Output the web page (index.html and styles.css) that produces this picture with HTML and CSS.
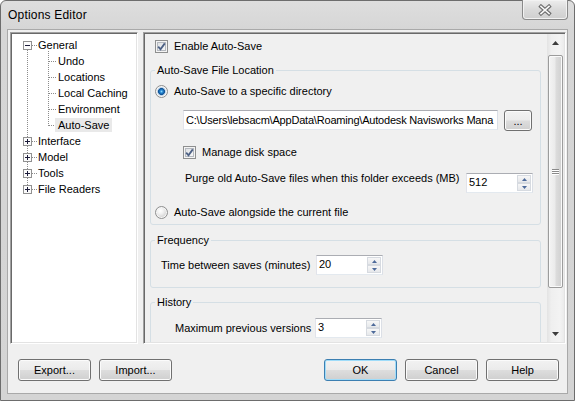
FILE: index.html
```html
<!DOCTYPE html>
<html>
<head>
<meta charset="utf-8">
<title>Options Editor</title>
<link rel="stylesheet" href="styles.css">
</head>
<body>
<div class="window">
  <div class="titlebar">
    <span class="title">Options Editor</span>
    <div class="close-btn">
      <svg width="14" height="12" viewBox="0 0 14 12"><path d="M3 2.5 L11 9.5 M11 2.5 L3 9.5" stroke="#6e6e6e" stroke-width="3.8" stroke-linecap="square" fill="none"/><path d="M3 2.5 L11 9.5 M11 2.5 L3 9.5" stroke="#fbfbfb" stroke-width="1.6" stroke-linecap="square" fill="none"/></svg>
    </div>
  </div>
  <div class="client">
    <div class="panes">
      <div class="tree sunken">
        <svg class="tree-lines" width="124" height="307" viewBox="0 0 124 307">
          <g stroke="#8c8c8c" stroke-width="1" stroke-dasharray="1 1" shape-rendering="crispEdges" fill="none">
            <line x1="15.5" y1="16" x2="15.5" y2="156"/>
            <line x1="20" y1="11.5" x2="25" y2="11.5"/>
            <line x1="20" y1="107.5" x2="25" y2="107.5"/>
            <line x1="20" y1="123.5" x2="25" y2="123.5"/>
            <line x1="20" y1="139.5" x2="25" y2="139.5"/>
            <line x1="20" y1="155.5" x2="25" y2="155.5"/>
            <line x1="36.5" y1="17" x2="36.5" y2="92"/>
            <line x1="37" y1="27.5" x2="45" y2="27.5"/>
            <line x1="37" y1="43.5" x2="45" y2="43.5"/>
            <line x1="37" y1="59.5" x2="45" y2="59.5"/>
            <line x1="37" y1="75.5" x2="45" y2="75.5"/>
            <line x1="37" y1="91.5" x2="45" y2="91.5"/>
          </g>
        </svg>
        <ul class="tree-list">
          <li class="node root"><svg class="exp" width="9" height="9" viewBox="0 0 9 9"><rect x="0.5" y="0.5" width="8" height="8" fill="#fbfbfb" stroke="#919191"/><path d="M2 4.5 H7" stroke="#1b1b3a" stroke-width="1"/></svg><span class="tl">General</span></li>
          <li class="node child"><span class="tl">Undo</span></li>
          <li class="node child"><span class="tl">Locations</span></li>
          <li class="node child"><span class="tl">Local Caching</span></li>
          <li class="node child"><span class="tl">Environment</span></li>
          <li class="node child"><span class="tl sel">Auto-Save</span></li>
          <li class="node root"><svg class="exp" width="9" height="9" viewBox="0 0 9 9"><rect x="0.5" y="0.5" width="8" height="8" fill="#fbfbfb" stroke="#919191"/><path d="M2 4.5 H7 M4.5 2 V7" stroke="#1b1b3a" stroke-width="1"/></svg><span class="tl">Interface</span></li>
          <li class="node root"><svg class="exp" width="9" height="9" viewBox="0 0 9 9"><rect x="0.5" y="0.5" width="8" height="8" fill="#fbfbfb" stroke="#919191"/><path d="M2 4.5 H7 M4.5 2 V7" stroke="#1b1b3a" stroke-width="1"/></svg><span class="tl">Model</span></li>
          <li class="node root"><svg class="exp" width="9" height="9" viewBox="0 0 9 9"><rect x="0.5" y="0.5" width="8" height="8" fill="#fbfbfb" stroke="#919191"/><path d="M2 4.5 H7 M4.5 2 V7" stroke="#1b1b3a" stroke-width="1"/></svg><span class="tl">Tools</span></li>
          <li class="node root"><svg class="exp" width="9" height="9" viewBox="0 0 9 9"><rect x="0.5" y="0.5" width="8" height="8" fill="#fbfbfb" stroke="#919191"/><path d="M2 4.5 H7 M4.5 2 V7" stroke="#1b1b3a" stroke-width="1"/></svg><span class="tl">File Readers</span></li>
        </ul>
      </div>

      <div class="pagebox sunken">
        <div class="page">
          <div class="row enable">
            <span class="chk"><svg width="11" height="11" viewBox="0 0 11 11"><path d="M2.2 5.6 L4.5 8.3 L8.8 2.4" fill="none" stroke="#4d6185" stroke-width="1.8"/></svg></span>
            <span>Enable Auto-Save</span>
          </div>

          <fieldset class="grp g1">
            <legend>Auto-Save File Location</legend>
            <div class="row r-radio1"><span class="radio on"></span><span>Auto-Save to a specific directory</span></div>
            <div class="row r-path">
              <div class="textbox">C:\Users\lebsacm\AppData\Roaming\Autodesk Navisworks Mana</div>
              <button class="btn browse">...</button>
            </div>
            <div class="row r-manage">
              <span class="chk"><svg width="11" height="11" viewBox="0 0 11 11"><path d="M2.2 5.6 L4.5 8.3 L8.8 2.4" fill="none" stroke="#4d6185" stroke-width="1.8"/></svg></span>
              <span>Manage disk space</span>
            </div>
            <div class="row r-purge">
              <span class="purge-lbl">Purge old Auto-Save files when this folder exceeds (MB)</span>
              <div class="spin">
                <span class="val">512</span>
                <span class="sbtns">
                  <span class="sb"><svg width="5" height="3" viewBox="0 0 5 3"><path d="M2.5 0 L5 3 H0Z" fill="#4d6a9a"/></svg></span>
                  <span class="sb"><svg width="5" height="3" viewBox="0 0 5 3"><path d="M0 0 H5 L2.5 3Z" fill="#4d6a9a"/></svg></span>
                </span>
              </div>
            </div>
            <div class="row r-radio2"><span class="radio"></span><span>Auto-Save alongside the current file</span></div>
          </fieldset>

          <fieldset class="grp g2">
            <legend>Frequency</legend>
            <div class="row r-freq">
              <span class="field-lbl">Time between saves (minutes)</span>
              <div class="spin">
                <span class="val">20</span>
                <span class="sbtns">
                  <span class="sb"><svg width="5" height="3" viewBox="0 0 5 3"><path d="M2.5 0 L5 3 H0Z" fill="#4d6a9a"/></svg></span>
                  <span class="sb"><svg width="5" height="3" viewBox="0 0 5 3"><path d="M0 0 H5 L2.5 3Z" fill="#4d6a9a"/></svg></span>
                </span>
              </div>
            </div>
          </fieldset>

          <fieldset class="grp g3">
            <legend>History</legend>
            <div class="row r-hist">
              <span class="field-lbl">Maximum previous versions</span>
              <div class="spin">
                <span class="val">3</span>
                <span class="sbtns">
                  <span class="sb"><svg width="5" height="3" viewBox="0 0 5 3"><path d="M2.5 0 L5 3 H0Z" fill="#4d6a9a"/></svg></span>
                  <span class="sb"><svg width="5" height="3" viewBox="0 0 5 3"><path d="M0 0 H5 L2.5 3Z" fill="#4d6a9a"/></svg></span>
                </span>
              </div>
            </div>
          </fieldset>
        </div>

        <div class="vscroll">
          <div class="arrow"><svg width="7" height="4" viewBox="0 0 7 4"><path d="M3.5 0 L7 4 H0Z" fill="#3c3c3c"/></svg></div>
          <div class="thumb"><svg width="7" height="6" viewBox="0 0 7 6"><path d="M0 0.5 H7 M0 2.5 H7 M0 4.5 H7" stroke="#8a8a8a" stroke-width="1" shape-rendering="crispEdges"/><path d="M0 1.5 H7 M0 3.5 H7 M0 5.5 H7" stroke="#ffffff" stroke-width="1" shape-rendering="crispEdges"/></svg></div>
          <div class="track-fill"></div>
          <div class="arrow"><svg width="7" height="4" viewBox="0 0 7 4"><path d="M0 0 H7 L3.5 4Z" fill="#3c3c3c"/></svg></div>
        </div>
      </div>
    </div>

    <div class="buttonbar">
      <div class="btn-group">
        <button class="btn">Export...</button>
        <button class="btn">Import...</button>
      </div>
      <div class="btn-group">
        <button class="btn default">OK</button>
        <button class="btn">Cancel</button>
        <button class="btn">Help</button>
      </div>
    </div>
  </div>
</div>
</body>
</html>
```

FILE: styles.css
```css
* { box-sizing: border-box; }

html, body {
  margin: 0;
  padding: 0;
  background: #ffffff;
}

body {
  font-family: "Liberation Sans", Arial, sans-serif;
  font-size: 11px;
  color: #000;
}

.window {
  width: 575px;
  height: 401px;
  border: 1px solid #6d6d6d;
  border-radius: 6px 6px 0 0;
  background: linear-gradient(#dedede, #d6d6d6 28px, #d4d4d4);
  padding: 0 6px 6px;
  display: flex;
  flex-direction: column;
}

.titlebar {
  height: 28px;
  display: flex;
  align-items: center;
  padding-left: 1px;
}

.title {
  font-size: 12px;
  letter-spacing: 0.2px;
  color: #000;
}

.close-btn {
  margin-left: auto;
  align-self: flex-start;
  margin-top: -1px;
  width: 46px;
  height: 20px;
  border: 1px solid #8a8a8a;
  border-top: none;
  border-radius: 0 0 4px 4px;
  background: linear-gradient(#ededed, #dadada 50%, #cfcfcf);
  box-shadow: inset 0 0 0 1px #f2f2f2;
  display: flex;
  align-items: center;
  justify-content: center;
}

.client {
  flex: 1;
  border: 1px solid #a9a9a9;
  background: #f0f0f0;
  display: flex;
  flex-direction: column;
}

.panes {
  display: flex;
  gap: 5px;
  height: 314px;
  padding: 2px 1px 0 2px;
}

.sunken {
  border: 1px solid;
  border-color: #a0a0a0 #ffffff #ffffff #a0a0a0;
  padding: 1px;
  box-shadow: inset 1px 1px 0 #696969, inset -1px -1px 0 #e3e3e3;
}

/* tree */
.tree {
  width: 128px;
  background: #fff;
  position: relative;
}

.tree-lines {
  position: absolute;
  left: 1px;
  top: 1px;
}

.tree-list {
  list-style: none;
  margin: 0;
  padding: 3px 0 0;
  position: relative;
}

.node {
  height: 16px;
  display: flex;
  align-items: flex-start;
  white-space: nowrap;
}

.node.root { padding-left: 11px; }
.node.child { padding-left: 43px; }

.exp {
  display: block;
  flex: none;
  margin-top: 4px;
  margin-right: 4px;
}

.tl {
  line-height: 16px;
  padding: 0 2px;
}

.child .tl { padding: 0 3px; }

.tl.sel {
  background: #e9e9e9;
  line-height: 14px;
  margin-top: 1px;
}

/* page */
.pagebox {
  flex: 1;
  display: flex;
  background: #f0f0f0;
}

.page {
  flex: 1;
  overflow: hidden;
}

.row {
  display: flex;
  align-items: center;
  white-space: nowrap;
}

.enable {
  margin-top: 4px;
  height: 16px;
  padding-left: 10px;
  gap: 6px;
}

.chk {
  flex: none;
  display: block;
  width: 13px;
  height: 13px;
  border: 1px solid #8e8f8f;
  background: linear-gradient(135deg, #d7dade 0%, #f0f1f2 60%, #fbfbfb 100%);
  box-shadow: inset 0 0 0 1px #f4f4f4, inset 0 0 0 2px #b5b9bf;
}

.chk svg { display: block; }

.radio {
  flex: none;
  display: block;
  width: 13px;
  height: 13px;
  border-radius: 50%;
  border: 1px solid #8e8f8f;
  background: radial-gradient(circle at 40% 35%, #ffffff 0, #f1f1f1 3px, #d9d9d9 6px);
  box-shadow: inset 0 0 0 1px #f6f6f6;
}

.radio.on {
  background: radial-gradient(circle at 50% 50%, #8ad7fb 0, #2a8ad4 1.4px, #0c4f93 3.1px, #a6c3df 3.7px, #e0e8f0 4.6px, #f4f4f4 5.5px);
}

.grp {
  margin: 0 6px 0 5px;
  border: 1px solid #d5dfe5;
  border-radius: 3px;
  padding: 0;
  min-width: 0;
}

.grp legend {
  margin-left: 4px;
  padding: 0 2px;
  line-height: 14px;
  font-size: 11px;
}

.g1 { margin-top: 9px; padding-bottom: 4px; }
.g2 { margin-top: 8px; padding-bottom: 12px; }
.g3 { margin-top: 7px; padding-bottom: 12px; }

.r-radio1, .r-radio2 {
  height: 16px;
  padding-left: 4px;
  gap: 6px;
}

.r-radio1 { margin-top: 6px; }
.r-radio2 { margin-top: 11px; }

.r-path {
  margin-top: 11px;
  height: 21px;
  padding-left: 32px;
  align-items: flex-start;
}

.textbox {
  width: 315px;
  height: 20px;
  border: 1px solid;
  border-color: #abadb3 #dbdfe6 #e3e9ef #e2e3ea;
  background: #fff;
  padding-left: 2px;
  line-height: 18px;
  letter-spacing: -0.2px;
  overflow: hidden;
  white-space: nowrap;
}

.r-manage {
  margin-top: 13px;
  height: 16px;
  padding-left: 32px;
  gap: 6px;
}

.r-purge {
  margin-top: 11px;
  height: 22px;
  padding-left: 34px;
  align-items: flex-start;
}

.purge-lbl { line-height: 14px; }

.r-purge .spin {
  margin-left: auto;
  margin-top: 2px;
  margin-right: 7px;
}

.r-freq {
  margin-top: 8px;
  height: 20px;
  padding-left: 10px;
}

.r-freq .field-lbl { width: 155px; }

.r-hist {
  margin-top: 9px;
  height: 20px;
  padding-left: 24px;
}

.r-hist .field-lbl { width: 140px; }

.spin {
  flex: none;
  display: flex;
  width: 67px;
  height: 20px;
  border: 1px solid;
  border-color: #abadb3 #dbdfe6 #e3e9ef #e2e3ea;
  background: #fff;
}

.val {
  flex: 1;
  padding-left: 2px;
  line-height: 16px;
}

.sbtns {
  width: 15px;
  display: flex;
  flex-direction: column;
  padding: 1px 1px 1px 0;
}

.sb {
  flex: 1;
  display: flex;
  align-items: center;
  justify-content: center;
  border: 1px solid #d6dae0;
  background: linear-gradient(#f7f7f7, #e6e8eb);
}

.sb svg { display: block; }

/* scrollbar */
.vscroll {
  width: 17px;
  display: flex;
  flex-direction: column;
  background: linear-gradient(90deg, #e3e3e3, #efefef 25%, #f3f3f3 75%, #ebebeb);
}

.arrow {
  height: 17px;
  flex: none;
  display: flex;
  align-items: center;
  justify-content: center;
}

.arrow svg { display: block; }

.thumb {
  flex: none;
  margin: 4px 1px 0;
  height: 233px;
  border: 1px solid #9c9c9c;
  border-radius: 2px;
  background: linear-gradient(90deg, #f4f4f4, #ebebeb 45%, #dcdcdc 55%, #d0d0d0);
  box-shadow: inset 0 0 0 1px #fafafa;
  display: flex;
  align-items: center;
  justify-content: center;
}

.thumb svg { display: block; }

.track-fill { flex: 1; }

/* buttons */
.buttonbar {
  display: flex;
  justify-content: space-between;
  padding: 15px 8px 0 10px;
}

.btn-group {
  display: flex;
  gap: 8px;
}

.btn {
  width: 73px;
  height: 22px;
  padding: 0;
  font-family: "Liberation Sans", Arial, sans-serif;
  font-size: 11px;
  color: #000;
  border: 1px solid #707070;
  border-radius: 3px;
  background: linear-gradient(#f2f2f2 0%, #ebebeb 48%, #dddddd 52%, #cfcfcf 100%);
  box-shadow: inset 0 0 0 1px #fbfbfb;
}

.btn.default {
  border-color: #3c7fb1;
  box-shadow: inset 0 0 0 1px #9fdcf9;
}

.btn.browse {
  width: 28px;
  height: 21px;
  margin-left: 6px;
  line-height: 12px;
}
```
